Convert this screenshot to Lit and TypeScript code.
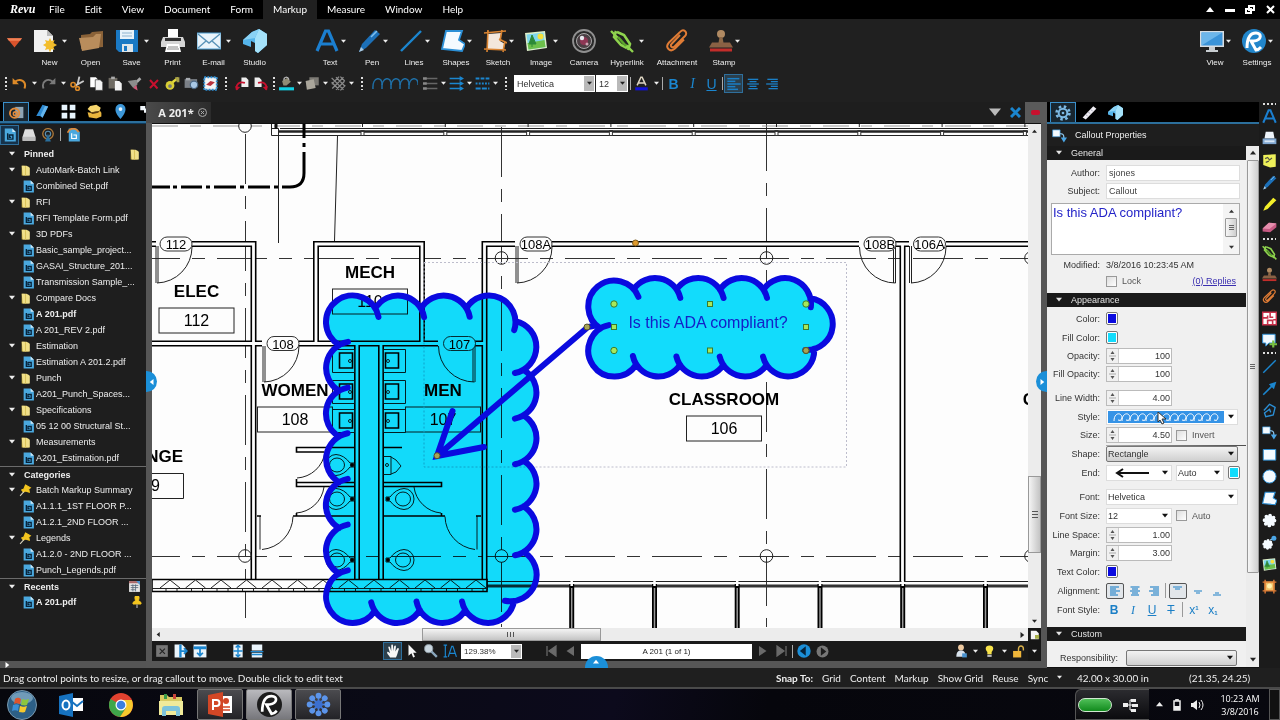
import { LitElement, html, css, svg, nothing } from "lit";
import { customElement } from "lit/decorators.js";
import { classMap } from "lit/directives/class-map.js";

/* ---------- shared styles ---------- */

const base = css`
  *, *::before, *::after { box-sizing: border-box; }
  :host { font-family: "Liberation Sans", Arial, sans-serif; font-size: 9px; color: #eee; }
  button { border: 0; padding: 0; margin: 0; background: none; color: inherit; font: inherit; display: flex; align-items: center; justify-content: center; cursor: default; }
  input, select, textarea { font: inherit; margin: 0; border-radius: 0; outline: 0; min-width: 0; }
  select { appearance: none; }
  a { color: inherit; }
  svg { display: block; flex: none; }
  .dots { display: flex; align-items: center; justify-content: center; }
  .dots::before { content: ""; width: 2px; height: 13px; background: repeating-linear-gradient(#ddd 0 2px, transparent 2px 4px); }
`;

/* ---------- icons, all on a 24 unit grid ---------- */

const file = svg`<path d="M3 1h13l6 6v16H3z" fill="#4aa8de"/><path d="M16 1v6h6z" fill="#cfeaf8"/><path d="M8 9v10h9v-7h-6v4h3" fill="none" stroke="#06233a" stroke-width="2.4"/>`;
const boldA = svg`<path d="M2 22 10.500 2h3L22 22M6 15h12" fill="none" stroke="#1b7fd0" stroke-width="3.200"/>`;
const house = svg`<path d="M0 11 9 3 16 0l8 5v11l-9 8-3-2v-8l-4-2v6l-8-3z" fill="#55b4ea"/><path d="m12 9 4-9 8 5v11l-9 8-3-2z" fill="#a5e2fa"/><path d="m0 11 9-8 7-3-4 9z" fill="#8ad2f5"/>`;
const clip = svg`<path d="M15 6 6.500 15c-2 2 .8 4.600 2.800 2.600L20 7c3.400-3.600-1.400-7.600-4.600-4.400L4 13.500C-.5 18.500 5 24 10 19.500l9-9" fill="none" stroke="#e07c35" stroke-width="2"/>`;
const link = svg`<path d="M1 2 8 9M16 16l7 7" stroke="#8fd44e" stroke-width="2.400"/><path d="M6 2 4 8l7 8 6 3M18 21l2-6-6-9-7-3" fill="none" stroke="#8fd44e" stroke-width="2.600"/><path d="m8 8 8 9" stroke="#5da52c" stroke-width="2.600"/>`;
const stamp = svg`<circle cx="12" cy="5" r="4" fill="#b08a62"/><path d="M10.500 8h3l1 6h-5z" fill="#8d6847"/><path d="M3 13.500h18l3 5H0z" fill="#8a6144"/><path d="M1 19.500h22v3H1z" fill="#c32d2a"/>`;
const photo = svg`<path d="m1 4 20-2 2 17-20 3z" fill="#dff0c9"/><path d="m2.500 5.500 17-2 2 14.500-17 2.500z" fill="#7fd7ee"/><path d="m3.500 14 17-3 1 7-17 2.500z" fill="#6cc04a"/><circle cx="16.500" cy="7.500" r="3" fill="#f7e13a"/><path d="m8 6 4 9H5zM8 12v6" fill="#2d8a39" stroke="#2d8a39"/>`;
const sketch = svg`<path d="m5 5 13-1-1 8 5 3-2 6-15-1z" fill="#f3e7dc"/><path d="M1 4 23 2M5 1 4 23M19 1l-2 11M1 20l22 1M16 10l8 4M22 12l-2 11" stroke="#d98432" stroke-width="1.600"/>`;
const shape = svg`<path d="M5 2h16l-3 9 6 4-3 7L1 20z" fill="#f4faff" stroke="#2b8fd6" stroke-width="1.800"/>`;
const pen = svg`<path d="M2 23 5 15 18 1l5 4L9 19z" fill="#1c70b8"/><path d="m14 8 6-6" stroke="#7fc0ef" stroke-width="1.600"/><path d="m2 23 2-5 3 3z" fill="#a9c9e2"/>`;
const line = svg`<path d="M2 22 22 2" stroke="#1b86cf" stroke-width="2.400"/>`;
const folder = svg`<path d="M5 3h5l2 2h6v16H5z" fill="#c9b043"/><path d="M5 3h9l6 4v14H7z" fill="#f1e08a"/><path d="M12 4v17" stroke="#d9c25a" stroke-width="2"/>`;
const pin = svg`<path d="m12 2 9 5-3 2 1 6-7-2-4 2-3-4 4-2z" fill="#f4c51f" stroke="#f4c51f" stroke-width="2"/><path d="m9 14-7 8" stroke="#d8d2bd" stroke-width="2"/>`;
const gear = svg`<circle cx="12" cy="12" r="6.500" fill="none" stroke="#7db9e4" stroke-width="3"/><circle cx="12" cy="12" r="9.600" fill="none" stroke="#7db9e4" stroke-width="4" stroke-dasharray="3.700 3.840"/><circle cx="12" cy="12" r="2" fill="#7db9e4"/>`;
const align = (k: string, c = "#1b7fc6") => {
  const w = [18, 12, 20, 12, 16];
  return w.map((n, i) => { const x = k === "l" ? 2 : k === "c" ? 12 - n / 2 : 22 - n; return svg`<path d="M${x} ${4 + i * 4}h${n}" stroke=${c} stroke-width="2.200"/>`; });
};

const icons: Record<string, unknown> = {
  file, boldA, house, clip, link, stamp, photo, sketch, shape, pen, line, folder, pin, gear,
  expand: svg`<path d="M0 5h24L12 20z" fill="#d9532c"/><path d="M0 5h24l-3 4H3z" fill="#f08155"/>`,
  new: svg`<path d="M1 1h13l6 6v16H1z" fill="#f1f1f1"/><path d="M14 1v6h6z" fill="#bbb"/><path d="m17 9 1.500 3 3-1-1 3 3.500 2-3.500 2 1 3-3-1-1.500 3.500-1.500-3.500-3.500 1 1.200-3L10 16l3.200-2-1.200-3 3.500 1z" fill="#f3bd2b"/>`,
  open: svg`<path d="m2 6 9-1 2-2 11-1v16L2 20z" fill="#8a6238"/><path d="m0 9 14-1 3-3h5l-2 14-17 3z" fill="#b98d5c"/>`,
  save: svg`<path d="M1 1h22v22H4l-3-3z" fill="#1a79c4"/><path d="M5 1h14v9H5z" fill="#e9f3fa"/><path d="M7 4h10M7 7h10" stroke="#8fb4cf"/><path d="M7 15h11v8H7z" fill="#dfe6ea"/><path d="M9 17h3v5H9z" fill="#1a79c4"/>`,
  print: svg`<path d="M7 0h10v9H7z" fill="#fff"/><path d="M2 8h20l2 5v5H0v-5z" fill="#d5d5d5"/><path d="M4 9h16v3H4z" fill="#333"/><path d="M6 15h12l2 8H4z" fill="#fff"/><path d="M7 18h10M6 20h12" stroke="#888"/>`,
  mail: svg`<path d="M0 4h24v16H0z" fill="#eaf4fb" stroke="#4d9fd4"/><path d="m1 5 11 9 11-9M1 19l8-7M23 19l-8-7" fill="none" stroke="#5a93b8" stroke-width="1.400"/>`,
  camera: svg`<circle cx="12" cy="12" r="11" fill="#2a2a2a" stroke="#909090" stroke-width="1.800"/><circle cx="12" cy="12" r="7.500" fill="#4b3f44" stroke="#a9a9a9"/><circle cx="12" cy="12" r="4" fill="#8d3654"/><circle cx="10" cy="9" r="2.200" fill="#e8e8ee"/><circle cx="15" cy="15" r="1.500" fill="#cfa4b4"/>`,
  monitor: svg`<path d="M0 2h24v16H0z" fill="#d9dee2"/><path d="M1.500 3.500h21v13h-21z" fill="#3b93d8"/><path d="m1.500 3.500 21 0-21 13z" fill="#6cb6ea"/><path d="M9 18h6v3h3v2H6v-2h3z" fill="#c8cdd1"/>`,
  revu: svg`<circle cx="12" cy="12" r="12" fill="#2286cb"/><path d="M5 19C5 9 8 4 14 4c6 0 6 7-2 8l-3 0 5 9c3 0 4-2 5-3" fill="none" stroke="#fff" stroke-width="3"/>`,
  undo: svg`<path d="M5 9c8-6 19-1 15 11" fill="none" stroke="#dd8a28" stroke-width="3.200"/><path d="M1 3v10h10z" fill="#dd8a28"/>`,
  redo: svg`<path d="M19 9C11 3 0 8 4 20" fill="none" stroke="#7a7a7a" stroke-width="3"/><path d="M23 3v10H13z" fill="#7a7a7a"/>`,
  cut: svg`<path d="m15 1-3 13M22 8 9 15" stroke="#c9c9c9" stroke-width="3"/><circle cx="5" cy="14" r="3.500" fill="none" stroke="#dd8a28" stroke-width="2.500"/><circle cx="12" cy="20" r="3" fill="none" stroke="#dd8a28" stroke-width="2.500"/>`,
  copy: svg`<path d="M2 2h9l3 3v13H2z" fill="#fff"/><path d="M10 6h8l4 4v13H10z" fill="#f3f3f3" stroke="#222"/>`,
  paste: svg`<path d="M1 3h14v17H1z" fill="#6e6a62"/><path d="M5 1h6v4H5z" fill="#aaa"/><path d="M11 8h7l4 4v11H11z" fill="#f3f3f3"/>`,
  brush: svg`<path d="m14 8 6-6 3 3-6 6z" fill="#a9a9a9"/><path d="m1 8 14-2 2 7-7 6z" fill="#8d8d8d"/><path d="m10 19 5-5 2 9z" fill="#d25a78"/>`,
  del: svg`<path d="m4 4 15 17M20 4 4 20" stroke="#c8102e" stroke-width="4"/>`,
  key: svg`<path d="M12 10 21 3" stroke="#e6dc3c" stroke-width="4"/><circle cx="8" cy="15" r="7" fill="#d9cf35"/><circle cx="8" cy="16" r="3" fill="#777"/><path d="M16 2h7v8h-4z" fill="#a9a24a"/>`,
  cam2: svg`<path d="M1 5h20v14H1z" fill="#7b8087"/><path d="M3 3h7v4H3z" fill="#a7abb0"/><circle cx="16" cy="14" r="6" fill="#a9c8e6" stroke="#4b6784" stroke-width="2"/>`,
  snap: svg`<path d="M2 2h20v20H2z" fill="#f4f4f4" stroke="#2b8fd6" stroke-width="3" stroke-dasharray="3 2"/><path d="m5 14 7-6 7 2-7 6z" fill="#b8323e"/>`,
  rotl: svg`<path d="M11 1h8l4 4v12H11z" fill="#eee"/><path d="M3 22C1 12 8 7 17 10" fill="none" stroke="#c8102e" stroke-width="3"/><path d="m0 16 9 1-6 6z" fill="#c8102e"/>`,
  rotr: svg`<path d="M1 1h8l4 4v12H1z" fill="#eee"/><path d="M21 22C23 12 16 7 7 10" fill="none" stroke="#c8102e" stroke-width="3"/><path d="m24 16-9 1 6 6z" fill="#c8102e"/>`,
  bucket: svg`<path d="M5 8 13 3l6 6-7 6H7z" fill="#8f8b74"/><path d="M8 7c-1-6 6-7 8-1" fill="none" stroke="#bbb" stroke-width="2"/><path d="M0 18h24v5H0z" fill="#12cfe2"/>`,
  layer: svg`<path d="M7 2h15v13H7z" fill="#7c7a74"/><path d="m1 8 13-3 3 14-14 3z" fill="#aaa69b"/>`,
  hatch: svg`<path d="m1 3 19 19M8 2l14 14M1 10l12 12M15 1l7 7M20 2 2 20M13 1 1 13M22 8 8 22M23 15l-8 8" stroke="#8a8a8a" stroke-width="2"/>`,
  lines1: svg`<path d="M3 4h20M3 12h20M3 20h20" stroke="#666" stroke-width="2.400"/><path d="M0 4h6M0 12h6M0 20h6" stroke="#888" stroke-width="4"/>`,
  lines2: svg`<path d="M1 4h20M1 12h20M1 20h20" stroke="#1b86cf" stroke-width="2.600"/><path d="m17 0 7 4-7 4zM17 8l7 4-7 4zM17 16l7 4-7 4z" fill="#1b86cf"/>`,
  lines3: svg`<path d="M1 4h22" stroke="#1b86cf" stroke-width="3" stroke-dasharray="6 2"/><path d="M1 12h22" stroke="#1b86cf" stroke-width="3" stroke-dasharray="3 2"/><path d="M1 20h22" stroke="#1b86cf" stroke-width="3" stroke-dasharray="8 2"/>`,
  textcolor: svg`<path d="M5 15 11 2h2l6 13M7.500 11h9" fill="none" stroke="#ddd5c2" stroke-width="2.400"/><path d="M2 18h20v5H2z" fill="#1212d8"/>`,
  al: align("l"), ac: align("c"), ar: align("r"),
  clipbook: svg`<path d="M10 3h13v18H10z" fill="#8ea5b5"/><circle cx="9" cy="13" r="7.500" fill="none" stroke="#e08a3a" stroke-width="3"/><circle cx="10" cy="14" r="3" fill="none" stroke="#e08a3a" stroke-width="2.500"/>`,
  ribbon: svg`<path d="m12 1 9 3-9 18-4-3-6 0z" fill="#2f8cd4"/><path d="m16 3 5 1-9 18-3-4z" fill="#66b5ec"/>`,
  grid4: svg`<path d="M1 1h9v9H1zM14 1h9v9h-9zM1 14h9v9H1zM14 14h9v9h-9z" fill="#e6f3fc"/>`,
  chest: svg`<path d="m1 13 5 1 15-3 2 3v6l-8 3-12-2z" fill="#e9b63d"/><path d="m1 8 4-5 10-2 7 5-2 5-13 2z" fill="#f5d56c"/><path d="m5 14 15-3-2 3-9 2z" fill="#5a3b10"/>`,
  place: svg`<path d="M12 24C3 14 4 9 4 8a8 8 0 0 1 16 0c0 2 0 7-8 16z" fill="#3d97d8"/><circle cx="12" cy="8" r="3" fill="#eaf6ff"/>`,
  piece: svg`<path d="M2 3h8v4h4V1h10v22H14v-9H8v-4H2z" fill="#f2f8fd"/>`,
  disk: svg`<path d="M5 2h14l4 13v7H1v-7z" fill="#dedede"/><path d="M1 15h22v7H1z" fill="#bcbcbc"/>`,
  radar: svg`<circle cx="12" cy="10" r="9" fill="none" stroke="#b07a3a" stroke-width="2.200"/><circle cx="12" cy="10" r="4.500" fill="none" stroke="#5a8fb0" stroke-width="2"/><path d="m12 10-5 13h10z" fill="#2a6f9c"/>`,
  refile: svg`<path d="M3 1h13l6 6v16H3z" fill="#4aa8de"/><path d="M8 9v9h8v-6h-5" fill="none" stroke="#fff" stroke-width="2"/><path d="M1 8C6-2 16 0 20 7" fill="none" stroke="#e08a3a" stroke-width="3"/>`,
  calendar: svg`<path d="M2 2h20v20H2z" fill="#e8e8e8"/><path d="M2 2h20v4H2z" fill="#a66"/><path d="M5 10h14M5 14h14M5 18h9M9 8v13M14 8v13" stroke="#567" stroke-width="1.500"/><path d="M15 2h7v7z" fill="#4a93d0"/>`,
  pushpin: svg`<path d="M8 1h8v4l-1 4 5 4v3H4v-3l5-4-1-4z" fill="#f4c51f" stroke="#f4c51f" stroke-width="2"/><path d="M12 17v7" stroke="#ccc" stroke-width="2"/>`,
  ruler: svg`<path d="m1 20 17-18 5 4L6 23z" fill="#f0eef4"/><path d="m6 15 3 3m1-7 3 3m1-7 3 3" stroke="#99a" stroke-width="1.500"/>`,
  callout: svg`<path d="M1 3h12v11H1z" fill="#f4faff" stroke="#2b8fd6"/><path d="M13 9c6 0 6 3 6 8" fill="none" stroke="#8cc4ea" stroke-width="2"/><path d="M14 15h10l-5 8z" fill="#4aa6e6"/>`,
  printer2: svg`<path d="M6 1h12l2 11H4z" fill="#eef4fa"/><path d="M1 12h22v9H1z" fill="#7fa6d0"/><path d="M4 15h16v3H4z" fill="#d8e6f4"/>`,
  note: svg`<path d="m2 3 20-1v20l-9 1-11-4z" fill="#eef05a"/><path d="m5 9 4-2 3 4 4-3M6 15l5-2" fill="none" stroke="#554" stroke-width="1.800"/>`,
  marker: svg`<path d="m2 22 3-7L18 1l5 4-14 14z" fill="#f4f02a"/>`,
  eraser: svg`<path d="m1 15 10-9 12 1v6l-10 8-12-1z" fill="#c65a83"/><path d="m1 15 10-9 12 1-11 9z" fill="#e68fae"/>`,
  plan: svg`<path d="M1 2h22v20H1z" fill="#fff" stroke="#c8324c" stroke-width="2.500"/><path d="M1 11h8V7M13 2v8h5M9 22v-7h8v7M18 14h5" fill="none" stroke="#c8324c" stroke-width="2.500"/>`,
  noteplus: svg`<path d="M1 2h20v14H11l-5 5v-5H1z" fill="#f0f8ff" stroke="#2b8fd6" stroke-width="1.500"/><path d="M18 12v11M12 18h12" stroke="#7ac143" stroke-width="3.500"/>`,
  arrowline: svg`<path d="M2 22 18 6" stroke="#1b86cf" stroke-width="2.600"/><path d="M23 1 11 5l8 8z" fill="#1b86cf"/>`,
  poly: svg`<path d="M3 12 12 2l9 5-3 12-12 3-2-6 8-6 2 5" fill="none" stroke="#2b8fd6" stroke-width="2.200"/>`,
  rect: svg`<path d="M2 4h20v17H2z" fill="#f4faff" stroke="#2b8fd6" stroke-width="1.500"/>`,
  circ: svg`<circle cx="12" cy="12" r="10.500" fill="#f4faff" stroke="#2b8fd6" stroke-width="1.500"/>`,
  cloud: svg`<circle cx="12" cy="12" r="8" fill="#f4faff"/><circle cx="12" cy="12" r="8" fill="none" stroke="#f4faff" stroke-width="6" stroke-linecap="round" stroke-dasharray="0 6.280"/>`,
  cloud2: svg`<circle cx="9" cy="15" r="6" fill="#f4faff"/><circle cx="9" cy="15" r="6" fill="none" stroke="#f4faff" stroke-width="5" stroke-linecap="round" stroke-dasharray="0 4.710"/><path d="m13 8 5-2" stroke="#8cc4ea" stroke-width="2"/><circle cx="19" cy="5" r="4" fill="#4aa6e6"/>`,
  crop: svg`<path d="M4 4h16v15H4z" fill="#f0c26a"/><path d="M5 1v22M19 1v22M1 5h22M1 19h22" stroke="#e07c35" stroke-width="2.200"/><circle cx="12" cy="11" r="4" fill="#fff2b0"/>`,
  p1: svg`<path d="M2 2h20v20H2z" fill="#777"/><path d="m8 8 9 9m0-9-9 9" stroke="#222" stroke-width="2"/>`,
  p2: svg`<path d="M1 1h13l5 5v17H1z" fill="#eaf4fb"/><path d="M9 1h4v22H9z" fill="#1b86cf"/><path d="M12 12h9m-4-5 5 5-5 5" fill="none" stroke="#1b86cf" stroke-width="3"/>`,
  p3: svg`<path d="M1 1h22v22H1z" fill="#eaf4fb"/><path d="M1 4h22v5H1z" fill="#1b86cf"/><path d="M12 8v11m-5-4 5 5 5-5" fill="none" stroke="#1b86cf" stroke-width="3"/>`,
  p4: svg`<path d="M4 1h16v22H4z" fill="#eaf4fb"/><path d="M4 12h16M12 2v20m-4-16 4-4 4 4m-8 12 4 4 4-4" fill="none" stroke="#1b86cf" stroke-width="2.400"/>`,
  p5: svg`<path d="M3 1h18v10H3zM3 15h18v8H3z" fill="#eaf4fb"/><path d="M1 13h22M3 18h18" stroke="#1b86cf" stroke-width="2.400"/>`,
  hand: svg`<path d="M7 23c-2-4-6-7-5-9s3 0 5 2L4 6c0-2 2-3 3 0l2 6L9 3c0-3 3-3 3 0l1 9 1-8c1-2 3-2 3 1l-1 8 3-5c1-2 3-1 3 1-2 5-2 9-5 14z" fill="#f8f8f8"/>`,
  cursor: svg`<path d="M6 1v19l5-4 3 7 3-1-3-7h6z" fill="#f8f8f8"/>`,
  lens: svg`<circle cx="8" cy="8" r="7" fill="#c9d6df" stroke="#8d9aa3" stroke-width="1.500"/><path d="m13 13 9 9" stroke="#8aa7bd" stroke-width="4"/>`,
  ia: svg`<path d="M1 2h6M4 2v20M1 22h6M9 22 15 4h2l6 18M11 16h10" fill="none" stroke="#1b86cf" stroke-width="2"/>`,
  first: svg`<path d="M4 2v20M22 2v20L8 12z" stroke="#6a6a6a" stroke-width="2.500" fill="#6a6a6a"/>`,
  prev: svg`<path d="M20 2v20L5 12z" fill="#6a6a6a"/>`,
  next: svg`<path d="M4 2v20l15-10z" fill="#6a6a6a"/>`,
  last: svg`<path d="M20 2v20M2 2v20l14-10z" stroke="#6a6a6a" stroke-width="2.500" fill="#6a6a6a"/>`,
  back: svg`<circle cx="12" cy="12" r="11.500" fill="#1b8fd8"/><path d="M15 4v16L5 12z" fill="#06233a"/>`,
  fwd: svg`<circle cx="12" cy="12" r="11" fill="#777"/><path d="M9 4v16l10-8z" fill="#1d1d1d"/>`,
  user: svg`<circle cx="12" cy="6" r="5" fill="#eec9a0"/><path d="M4 22c0-8 3-11 8-11s8 3 8 11z" fill="#d8e2ec"/><path d="M14 16h8v7h-8z" fill="#4a93d0"/>`,
  bulb: svg`<path d="M12 1c9 0 8 8 4 12v4H8v-4C4 9 3 1 12 1z" fill="#f7e24a"/><path d="M8 18h8v4H8z" fill="#bbb"/>`,
  lock: svg`<path d="M12 11V7c0-7 9-7 9 0v3" fill="none" stroke="#d8b04a" stroke-width="2.600"/><path d="M2 11h15v12H2z" fill="#f0b63a"/>`,
  page: svg`<path d="M2 2h13l6 6v14H2z" fill="#f4f4f4"/><path d="M12 12h10v9H12z" fill="#a8b04a"/>`,
};

const ic = (name: string, s = 16) => html`<svg width=${s} height=${s} viewBox="0 0 24 24" aria-hidden="true">${icons[name]}</svg>`;
const tri = (dir: string, w = 6, c = "currentColor") => {
  const d: Record<string, string> = { d: "M0 0h8L4 5z", u: "M0 5h8L4 0z", l: "M6 0v8L1 4z", r: "M2 0v8l5-4z" };
  return html`<svg width=${w} height=${w} viewBox=${dir === "d" || dir === "u" ? "0 -1 8 8" : "0 0 8 8"} aria-hidden="true"><path d=${d[dir]} fill=${c}></path></svg>`;
};

/* ---------- file access panel ---------- */

type Entry = [kind: string, text: string, extra?: string];
const entries: Entry[] = [
  ["head", "Pinned", "folder"],
  ["folder", "AutoMark-Batch Link"], ["file", "Combined Set.pdf"],
  ["folder", "RFI"], ["file", "RFI Template Form.pdf"],
  ["folder", "3D PDFs"], ["file", "Basic_sample_project..."], ["file", "GASAI_Structure_201..."], ["file", "Transmission Sample_..."],
  ["folder", "Compare Docs"], ["file", "A 201.pdf", "bold"], ["file", "A 201_REV 2.pdf"],
  ["folder", "Estimation"], ["file", "Estimation A 201.2.pdf"],
  ["folder", "Punch"], ["file", "A201_Punch_Spaces..."],
  ["folder", "Specifications"], ["file", "05 12 00 Structural St..."],
  ["folder", "Measurements"], ["file", "A201_Estimation.pdf"],
  ["head", "Categories"],
  ["pin", "Batch Markup Summary"], ["file", "A1.1.1_1ST FLOOR P..."], ["file", "A1.2.1_2ND FLOOR ..."],
  ["pin", "Legends"], ["file", "A1.2.0 - 2ND FLOOR ..."], ["file", "Punch_Legends.pdf"],
  ["head", "Recents", "calendar"], ["file", "A 201.pdf", "pinned"],
];

@customElement("file-panel")
class FilePanel extends LitElement {
  static styles = [base, css`
    :host { display: flex; flex-direction: column; background: #1e1e1e; min-height: 0; overflow: hidden; }
    .tabs { display: flex; height: 21px; background: #000; border-bottom: 2px solid #2c6f9c; padding-left: 3px; flex: none; overflow: hidden; }
    .tabs button { width: 26px; flex: none; }
    .tabs .on { background: #182630; border: 1px solid #3a8fca; border-bottom: 0; }
    .tools { display: flex; height: 22px; align-items: center; flex: none; border-top: 1px solid #0f3a5a; }
    .tools button { width: 19px; height: 20px; }
    .tools .on { border: 1px solid #2f6f9c; background: #16324a; }
    .tools i { width: 1px; height: 13px; background: #aaa; margin: 0 3px; }
    ul { list-style: none; margin: 0; padding: 1px 0 0; flex: 1; min-height: 0; overflow: hidden; }
    li { display: flex; align-items: center; height: 16px; gap: 1px; padding-left: 22px; white-space: nowrap; }
    li.branch { padding-left: 9px; gap: 4px; }
    li.head { padding-left: 9px; gap: 9px; font-weight: bold; padding-right: 5px; }
    li.rule { border-top: 1px solid #6b6b6b; }
    li.bold { font-weight: bold; }
    li span { flex: 1; }
    li.pinned { padding-right: 3px; }
    .foot { height: 7px; background: #555; flex: none; display: flex; align-items: center; padding-left: 4px; color: #fff; }
  `];
  render() {
    return html`
      <div class="tabs">${["clipbook", "ribbon", "grid4", "chest", "place", "piece"].map((n, i) => html`<button class=${i ? "" : "on"} aria-label=${n}>${ic(n, 15)}</button>`)}</div>
      <div class="tools">
        <button class="on" aria-label="file">${ic("file", 14)}</button><button aria-label="disk">${ic("disk", 14)}</button><button aria-label="radar">${ic("radar", 14)}</button><i></i><button aria-label="recent files">${ic("refile", 14)}</button>
      </div>
      <ul>${entries.map(([k, t, x], i) => html`
        <li class=${classMap({ head: k === "head", branch: k === "folder" || k === "pin", rule: k === "head" && i > 0, bold: x === "bold" || x === "pinned", pinned: x === "pinned" })}>
          ${k === "file" ? ic("file", 13) : tri("d", 6)}
          ${k === "folder" || k === "pin" ? ic(k, 13) : nothing}
          <span>${t}</span>
          ${k === "head" && x ? ic(x, 13) : nothing}${x === "pinned" ? ic("pushpin", 12) : nothing}
        </li>`)}</ul>
      <div class="foot">${tri("r", 6)}</div>`;
  }
}

/* ---------- floor plan with markups ---------- */

type Pt = [number, number];

/* Builds a revision cloud from circle centres given clockwise; every scallop runs past its cusp as a short tail. */
function cloudPath(c: Pt[], r: number) {
  const n = c.length;
  const cusp = (a: Pt, b: Pt) => {
    const dx = b[0] - a[0], dy = b[1] - a[1];
    return Math.atan2(dy, dx) - Math.acos(Math.hypot(dx, dy) / 2 / r);
  };
  const at = (p: Pt, t: number) => `${(p[0] + r * Math.cos(t)).toFixed(1)} ${(p[1] + r * Math.sin(t)).toFixed(1)}`;
  let fill = "", stroke = "";
  for (let i = 0; i < n; i++) {
    const prev = c[(i + n - 1) % n], cur = c[i], next = c[(i + 1) % n];
    const start = at(prev, cusp(prev, cur));
    const t = cusp(cur, next);
    const end = at(cur, t), tail = at(cur, t + 0.35);
    const p = cusp(prev, cur);
    const sx = prev[0] + r * Math.cos(p), sy = prev[1] + r * Math.sin(p);
    let sweep = t - Math.atan2(sy - cur[1], sx - cur[0]);
    sweep = ((sweep % (2 * Math.PI)) + 2 * Math.PI) % (2 * Math.PI);
    fill += `${i ? "" : "M" + start}A${r} ${r} 0 ${sweep > Math.PI ? 1 : 0} 1 ${end}`;
    stroke += `M${start}A${r} ${r} 0 ${sweep + 0.35 > Math.PI ? 1 : 0} 1 ${tail}`;
  }
  return { fill: fill + "Z", stroke };
}

const big = cloudPath([
  ...[352.5, 398, 443.7, 489].map((x): Pt => [x, 322]),
  ...[347, 392.6, 438.2, 483.7, 529.3, 574.8].map((y): Pt => [510, y]),
  ...[488, 442.5, 397, 352.5].map((x): Pt => [x, 596.5]),
  ...[550.7, 505, 459.3, 413.7, 368].map((y): Pt => [352.5, y]),
], 26.5);
const small = cloudPath([
  [614.3, 306.5], ...[655, 698.3, 741.7, 785].map((x): Pt => [x, 304]), [806.5, 324],
  ...[788.3, 745, 701.7, 658.3, 614.3].map((x): Pt => [x, 350.5]),
], 26);

const walls = "M152 244H156M192 244H253.500V579M152 343.500H262M299 343.500H438M473 343.500H484.500M316 343.500V244H422V343.500M357 345V579M381 345V579M515 244H484.500V590M552 244H859M893 244H909M902.500 244V581M946 244H1028";
const doors = "M156 246v37M158 246v37M192 247a36 36 0 0 1-35 36M263 346v36M265 346v36M299 346a36 36 0 0 1-35 36M475 346v36M473 346v36M438.500 346a36 36 0 0 0 36 36M516 246v37M518 246v37M552 247a36 36 0 0 1-35 36M895.500 246v37M893.500 246v37M859.500 247a36 36 0 0 0 36 36M909.500 246v37M911.500 246v37M946 247a36 36 0 0 1-35 36M325 452a30 30 0 0 1-28 26M324 487a30 30 0 0 1-28 26M414 487a30 30 0 0 0 27 26M260 516v33.500M262 549.500a34 34 0 0 0 31-33M477 516v33.500M475 549.500a34 34 0 0 1-30-33";
const tags: [string, number, number][] = [["112", 176, 244], ["108", 283, 343.5], ["107", 459.5, 343.5], ["108A", 536, 244], ["108B", 880, 244], ["106A", 929.5, 244]];
const rooms: [string, string, number, number][] = [["ELEC", "112", 196.5, 297], ["MECH", "110", 370, 278], ["WOMEN", "108", 295, 396], ["MEN", "107", 443, 396], ["CLASSROOM", "106", 724, 405]];
const posts = [571.7, 654.5, 737.2, 820, 902.7, 985.5];
const range = (n: number) => [...Array(n).keys()];

@customElement("plan-view")
class PlanView extends LitElement {
  static styles = [base, css`
    :host { display: block; background: #fdfdfd; overflow: hidden; min-height: 0; min-width: 0; position: relative; }
    .sheet { position: absolute; inset: 0; width: 100%; height: 100%; font-family: "Liberation Sans", Arial, sans-serif; }
    .thin { fill: none; stroke: #222; stroke-width: 1; }
    .axis { fill: none; stroke: #333; stroke-width: 1; stroke-dasharray: 50 12 13 12; }
    .heavy { fill: none; stroke: #000; stroke-width: 1.6; }
    .name { font-size: 17px; font-weight: bold; text-anchor: middle; fill: #000; }
    .num { font-size: 16px; text-anchor: middle; fill: #000; }
    .tag { font-size: 13px; text-anchor: middle; fill: #000; }
    .end { text-anchor: end; }
    .fill { fill: #12dcfc; mix-blend-mode: multiply; }
    .ink { fill: none; stroke: #0a0adf; stroke-width: 6; stroke-linecap: round; }
    .note { font-size: 16px; fill: #1420c8; text-anchor: middle; }
    .grip { fill: #a6e85c; stroke: #3c7a2c; stroke-width: 1; }
    .knob { fill: #a9a455; stroke: #55532c; stroke-width: 1; }
    .bounds { fill: none; stroke: #bdbdcc; stroke-dasharray: 2 2; }
  `];
  render() {
    return html`<svg class="sheet" viewBox="152 124 876 504" preserveAspectRatio="xMinYMin slice" role="img" aria-label="Floor plan A 201">
      <path class="axis" d="M130 258.500H1028M130 556.500H1028M245.500 134V618M501.500 127V627M766.500 121V627"/>
      <path d="M152 126H1028" stroke="#999" stroke-dasharray="26 12 11 12"/>
      <path class="thin" d="M271.500 124v11.500H1028M271.500 128.500h7v7M280 128.500h748"/>
      <path d="M278 131.500h750" stroke="#222" stroke-width="2.600"/><path d="M276 124v5" stroke="#111" stroke-width="3"/>
      ${range(9).map(i => svg`<path d="M${362.5 + i * 82.8} 130v6" stroke="#333" stroke-width="4"/><path d="M${362.5 + i * 82.8} 132v3" stroke="#fff" stroke-width="2"/><path class="thin" d="M${362.5 + i * 82.8} 124v3"/>`)}
      <path class="thin" d="M278.500 135V243M337.500 136 334.500 241" stroke="#555"/>
      <path d="M152 187h18m3 0h4m4 0h21m4 0h4m4 0h22m4 0h4m4 0h22m4 0h4m4 0h8q14 0 14-14v-21m0-5v-4m0-5v-14" fill="none" stroke="#000" stroke-width="3"/>
      <path d=${walls} fill="none" stroke="#000" stroke-width="6"/><path d=${walls} fill="none" stroke="#fdfdfd" stroke-width="2.800"/>
      <path class="thin" d=${doors}/>
      <path class="thin" d="M487 581.500h541"/><path d="M487 586h541" stroke="#333" stroke-width="3"/>
      ${posts.map(x => svg`<path d="M${x} 584V628" stroke="#000" stroke-width="5"/><path d="M${x} 588V628" stroke="#999" stroke-width="1.500"/><path d="M${x} 581V586" stroke="#fff" stroke-width="2.500"/>`)}
      <path d="M152 579.500h335v12H152z" fill="#fdfdfd" stroke="#000" stroke-width="1.600"/><path class="thin" d="M152 588.500h335"/>
      ${range(13).map(i => svg`<path class="thin" d="M${160 + i * 25.5} 588 l10 -8 10 8M${166 + i * 25.5} 588v3M${177 + i * 25.5} 588v3"/>`)}
      ${[349, 380, 409].map(y => svg`<path class="thin" d="M332.500 ${y}.5h22v23h-22zM383.500 ${y}.5h22v23h-22z"/><path class="heavy" d="M339.500 ${y + 4}h13v15h-13zM385.500 ${y + 4}h13v15h-13z"/><circle class="thin" cx="350" cy=${y + 12} r="1.500"/><circle class="thin" cx="388" cy=${y + 12} r="1.500"/>`)}
      <path class="heavy" d="M402 447.500H383M355 447.500H296.500v4.500h28M355 482.500H296.500v4H355M383 482.500h58.500v4H383M355 516H293M383 516h62M257 516h4M476 516h5M296.500 479v3M296.500 513v3M441.500 513v3"/>
      ${[[338, 465, 1], [338, 499, 1], [338, 560, 1], [402, 499, -1], [402, 560, -1]].map(([x, y, s]) => svg`<path class="thin" d="M${x + 16 * s} ${y - 2}l${-4 * s} 0q${-6 * s} -8 ${-14 * s} -8.500a10 10.500 0 0 ${s > 0 ? 0 : 1} 0 21q${8 * s} -.5 ${14 * s} -8.500l${4 * s} 0z"/><ellipse class="thin" cx=${x - s} cy=${y} rx="7.500" ry="7"/><circle cx=${x + 14 * s} cy=${y} r="2"/>`)}
      <path class="thin" d="M383.500 456.500h7.500v18h-7.500M391 457l5 3 5 6-5 6-5 2"/><circle class="thin" cx="387" cy="465" r="1.500"/>
      ${[[245, 126], [245, 556], [501.5, 258], [501.5, 556], [766.5, 258], [766.5, 556], [1031, 258], [1031, 556]].map(([x, y]) => svg`<circle class="thin" cx=${x} cy=${y} r="6.300"/>`)}
      ${tags.map(([t, x, y]) => svg`<rect x=${x - 16} y=${y - 7} width="32" height="14" rx="7" fill="#fdfdfd" stroke="#333"/><text class="tag" x=${x} y=${y + 5}>${t}</text>`)}
      ${rooms.map(([n, t, x, y]) => svg`<text class="name" x=${x} y=${y}>${n}</text><rect class="thin" x=${x - 37.5} y=${y + 11} width="75" height="25"/><text class="num" x=${x} y=${y + 29}>${t}</text>`)}
      <text class="name end" x="183" y="462">NGE</text><path class="thin" d="M152 473.500h31.500v25H152"/><text class="num end" x="160" y="491">9</text>
      <text class="name" x="1029" y="405">C</text>
      <path class="bounds" d="M424 262.500H846.500V467H424z"/>
      <path class="fill" d=${big.fill}/><path class="ink" d=${big.stroke}/>
      <path class="ink" d="M598 325 588 327 437 456M452.500 411 437 456 484 447"/>
      <path d=${small.fill} fill="#12dcfc"/><path class="ink" d=${small.stroke}/>
      <text class="note" x="708" y="328">Is this ADA compliant?</text>
      ${[614, 806].flatMap(x => [304, 350.5].map(y => svg`<circle class="grip" cx=${x} cy=${y} r="3.200"/>`))}
      ${[[710, 304], [614, 327], [806, 327], [710, 350.5]].map(([x, y]) => svg`<rect class="grip" x=${x - 2.5} y=${y - 2.5} width="5" height="5"/>`)}
      ${[[587, 327], [437, 455.7], [806, 350.5]].map(([x, y]) => svg`<circle class="knob" cx=${x} cy=${y} r="3"/>`)}
      <circle cx="635.500" cy="243" r="3" fill="#e09a2c" stroke="#7a5a1c"/>
    </svg>`;
  }
}

/* ---------- properties panel ---------- */

@customElement("properties-panel")
class PropertiesPanel extends LitElement {
  static styles = [base, css`
    :host { display: flex; flex-direction: column; background: #1e1e1e; min-height: 0; overflow: hidden; }
    .tabs { display: flex; height: 22px; background: #000; border-bottom: 2px solid #2c6f9c; padding-left: 3px; flex: none; }
    .tabs button { width: 26px; }
    .tabs .on { background: #182630; border: 1px solid #3a8fca; border-bottom: 0; }
    .title { display: flex; align-items: center; gap: 8px; height: 22px; flex: none; padding-left: 5px; }
    .body { flex: 1; min-height: 0; display: grid; grid-template-columns: 1fr 13px; overflow: hidden; border-bottom: 1px solid #111; }
    .form { background: #f0f0f0; color: #333; overflow: hidden; min-width: 0; }
    h3 { margin: 0; height: 14px; background: #1a1a1a; color: #e4e4e4; font-size: 9px; line-height: 14px; font-weight: normal; display: flex; align-items: center; gap: 9px; padding-left: 9px; }
    .group { padding: 4px 6px 4px 0; }
    .look { padding: 2px 6px 8px 0; }
    .row { display: grid; grid-template-columns: 53px 1fr; column-gap: 6px; height: 18px; align-items: center; }
    .row > label, .row > span { text-align: right; white-space: nowrap; }
    .row > .cell { text-align: left; }
    .short { height: 16px; }
    .tall { height: 19px; }
    .space { margin-top: 6px; }
    .cell { display: flex; align-items: center; gap: 4px; min-width: 0; }
    .text { width: 100%; height: 16px; border: 1px solid #ddd; background: #fff; color: #444; padding: 0 2px; }
    .memo { display: grid; grid-template-columns: 1fr 16px; margin: 3px 0 2px 4px; border: 1px solid #aaa; height: 52px; background: #fff; }
    .memo textarea { border: 0; resize: none; font-size: 13px; line-height: 15px; padding: 1px; color: #2424c8; overflow: hidden; background: none; white-space: nowrap; }
    .bar { display: grid; grid-template-rows: 14px 19px 1fr 14px; background: #f4f4f4; justify-items: center; align-items: center; color: #333; }
    .bar b, .scroll b { width: 12px; height: 100%; border: 1px solid #999; background: linear-gradient(90deg, #f6f6f6, #cfcfcf); border-radius: 1px; display: grid; place-items: center; }
    .bar b::before, .scroll b::before { content: ""; width: 5px; height: 6px; background: repeating-linear-gradient(#666 0 1px, transparent 1px 2px); }
    .scroll { display: grid; grid-template-rows: 14px 413fr 80fr 14px; background: #ececec; justify-items: center; align-items: center; color: #222; }
    .lock { justify-content: space-between; }
    .check { display: flex; align-items: center; gap: 5px; color: #555; }
    .check input { appearance: none; width: 11px; height: 11px; border: 1px solid #999; background: linear-gradient(135deg, #ddd, #fff); }
    .lock a { color: #3a2fb0; margin-right: 4px; }
    .swatch { width: 12px; height: 13px; border: 1px solid #777; border-radius: 2px; background: #fff; padding: 1px; }
    .swatch::before { content: ""; width: 100%; height: 100%; background: #0a0adf; }
    .cyan::before { background: #12dcfc; }
    .spin { display: grid; grid-template-columns: 12px 1fr; width: 66px; height: 16px; border: 1px solid #bbb; background: #fff; }
    .spin i { display: grid; place-items: center; background: #f0f0f0; border-right: 1px solid #ccc; color: #555; }
    .spin input { border: 0; text-align: right; padding: 0 1px; color: #333; background: none; }
    .pick { display: flex; align-items: center; justify-content: flex-start; position: relative; background: #fff; border: 1px solid #ddd; height: 16px; color: #333; }
    .pick select { width: 100%; height: 100%; border: 0; background: none; color: #333; padding: 0 3px 0 1px; }
    .pick > svg:last-child { position: absolute; right: 3px; color: #111; }
    .wide { width: 132px; }
    .half { width: 66px; }
    .auto { width: 48px; }
    .grey { background: linear-gradient(#f2f2f2, #cfcfcf); border-color: #777; border-radius: 2px; }
    .style { background: #3593e6; margin: 1px; width: 116px; height: 12px; }
    .ghost { position: relative; }
    .ghost::before { content: ""; position: absolute; left: 59px; right: -20px; top: 1px; height: 1px; background: linear-gradient(90deg, #aaa, #444); z-index: 1; }
    .tools { gap: 3px; }
    .tools button { width: 16px; height: 16px; color: #1b7fc6; font-size: 12px; line-height: 16px; }
    .tools .on { border: 1px solid #555; background: #e2e6ea; border-radius: 2px; width: 18px; }
    .tools i { width: 1px; height: 15px; background: #999; }
    .tools .i { font-style: italic; font-family: "Liberation Serif", serif; }
    .tools .u { text-decoration: underline; }
    .tools .s { text-decoration: line-through; }
    .tools sup, .tools sub { font-size: 6px; font-weight: bold; line-height: 6px; }
    .tools sup { align-self: flex-start; padding-top: 3px; }
    .tools sub { align-self: flex-end; padding-bottom: 2px; }
    .custom { grid-template-columns: 71px 1fr; column-gap: 8px; margin-top: 4px; }
    .resp { width: 111px; }
    .mouse { position: absolute; left: 50px; top: 1px; z-index: 2; }
  `];
  private spin(id: string, v: string) {
    return html`<div class="spin"><i><svg width="7" height="12" viewBox="0 0 7 12"><path d="M1.500 4h4l-2-3zM1.500 8h4l-2 3z" fill="#555"/><path d="M0 6h7" stroke="#aaa"/></svg></i><input id=${id} .value=${v}></div>`;
  }
  private pick(id: string, v: string, cls: string, label = "") {
    return html`<div class="pick ${cls}"><select id=${id} aria-label=${label || nothing}><option>${v}</option></select>${tri("d", 6)}</div>`;
  }
  private row(label: string, id: string, content: unknown, cls = "") {
    return html`<div class="row ${cls}"><label for=${id}>${label}</label><div class="cell">${content}</div></div>`;
  }
  render() {
    return html`
      <div class="tabs"><button class="on" aria-label="Properties">${ic("gear", 16)}</button><button aria-label="Measurements">${ic("ruler", 15)}</button><button aria-label="Studio">${ic("house", 15)}</button></div>
      <div class="title">${ic("callout", 15)}<span>Callout Properties</span></div>
      <div class="body">
        <div class="form">
          <h3>${tri("d", 6)}General</h3>
          <div class="group">
            ${this.row("Author:", "author", html`<input class="text" id="author" .value=${"sjones"}>`)}
            ${this.row("Subject:", "subject", html`<input class="text" id="subject" .value=${"Callout"}>`)}
            <div class="memo"><textarea aria-label="Comment" .value=${"Is this ADA compliant?"}></textarea><div class="bar">${tri("u", 5)}<b></b><i></i>${tri("d", 5)}</div></div>
            <div class="row short"><span>Modified:</span><div class="cell">3/8/2016 10:23:45 AM</div></div>
            <div class="row short"><span></span><div class="cell lock"><label class="check"><input type="checkbox">Lock</label><a href="#">(0) Replies</a></div></div>
          </div>
          <h3>${tri("d", 6)}Appearance</h3>
          <div class="group look">
            ${this.row("Color:", "color", html`<button id="color" class="swatch"></button>`, "tall")}
            ${this.row("Fill Color:", "fillc", html`<button id="fillc" class="swatch cyan"></button>`, "tall")}
            ${this.row("Opacity:", "op", this.spin("op", "100"))}
            ${this.row("Fill Opacity:", "fop", this.spin("fop", "100"))}
            ${this.row("Line Width:", "lw", this.spin("lw", "4.00"), "space")}
            ${this.row("Style:", "style", html`<button id="style" class="pick wide"><svg class="style" viewBox="0 0 116 12">${range(13).map(i => svg`<path d="M${6 + i * 8} 10c0-9 8-9 8-3q-1 4-4 2" fill="none" stroke="#fff"/>`)}</svg><svg class="mouse" width="10" height="14" viewBox="0 0 10 14"><path d="M1 1v10l2-2 2 4 2-1-2-4h4z" fill="#fff" stroke="#333"/></svg>${tri("d", 6)}</button>`, "tall")}
            ${this.row("Size:", "size", html`${this.spin("size", "4.50")}<label class="check"><input type="checkbox">Invert</label>`)}
            ${this.row("Shape:", "shape", this.pick("shape", "Rectangle", "wide grey"), "tall ghost")}
            ${this.row("End:", "end", html`<button id="end" class="pick half"><svg width="48" height="10" viewBox="0 0 48 10"><path d="M10 5h32M16 1 10 5l6 4" fill="none" stroke="#111" stroke-width="2"/></svg>${tri("d", 6)}</button>${this.pick("endsize", "Auto", "auto", "End size")}<button class="swatch cyan" aria-label="End fill"></button>`, "tall")}
            ${this.row("Font:", "font", this.pick("font", "Helvetica", "wide"), "space")}
            ${this.row("Font Size:", "fs", html`${this.pick("fs", "12", "half")}<label class="check"><input type="checkbox">Auto</label>`, "tall")}
            ${this.row("Line Space:", "ls", this.spin("ls", "1.00"), "tall")}
            ${this.row("Margin:", "mg", this.spin("mg", "3.00"))}
            ${this.row("Text Color:", "tc", html`<button id="tc" class="swatch"></button>`, "tall")}
            <div class="row tall"><span>Alignment:</span><div class="cell tools"><button class="on" aria-label="Left">${ic("al", 12)}</button><button aria-label="Center">${ic("ac", 12)}</button><button aria-label="Right">${ic("ar", 12)}</button><i></i><button class="on" aria-label="Top"><svg width="12" height="12" viewBox="0 0 12 12"><path d="M1 2h9M3 4h5" stroke="#1b7fc6"/></svg></button><button aria-label="Middle"><svg width="12" height="12" viewBox="0 0 12 12"><path d="M2 6h8M4 8h4" stroke="#1b7fc6"/></svg></button><button aria-label="Bottom"><svg width="12" height="12" viewBox="0 0 12 12"><path d="M2 10h8M4 8h4" stroke="#1b7fc6"/></svg></button></div></div>
            <div class="row tall"><span>Font Style:</span><div class="cell tools"><button><b>B</b></button><button class="i">I</button><button class="u">U</button><button class="s">T</button><i></i><button>x<sup>1</sup></button><button>x<sub>1</sub></button></div></div>
          </div>
          <h3>${tri("d", 6)}Custom</h3>
          <div class="group"><div class="row custom"><label for="resp">Responsibility:</label><div class="cell">${this.pick("resp", "", "grey resp")}</div></div></div>
        </div>
        <div class="scroll">${tri("u", 6)}<b></b><i></i>${tri("d", 6)}</div>
      </div>`;
  }
}

/* ---------- application shell ---------- */

type Tool = [icon: string, label: string, drop: boolean, cls?: string];
const fileTools: Tool[] = [["new", "New", true], ["open", "Open", false], ["save", "Save", true], ["print", "Print", false], ["mail", "E-mail", true], ["house", "Studio", false]];
const markupTools: Tool[] = [["boldA", "Text", true], ["pen", "Pen", true], ["line", "Lines", true], ["shape", "Shapes", true], ["sketch", "Sketch", true], ["photo", "Image", true, "mid"], ["camera", "Camera", false], ["link", "Hyperlink", true, "mid"], ["clip", "Attachment", false, "wide"], ["stamp", "Stamp", true, "slim"]];
const viewTools: Tool[] = [["monitor", "View", true], ["revu", "Settings", true]];
const strip = ["boldA", "printer2", "note", "pen", "marker", "eraser", "", "link", "stamp", "clip", "plan", "noteplus", "", "line", "arrowline", "poly", "callout", "rect", "circ", "shape", "cloud", "cloud2", "photo", "crop"];

@customElement("app-root")
class AppRoot extends LitElement {
  static styles = [base, css`
    :host { display: grid; grid-template-rows: auto auto minmax(0, 1fr) 21px 31px; height: 100vh; background: #1f1f1f; overflow: hidden; }
    .menu { display: flex; height: 19px; background: #000; font: 10px/19px Lato, "Open Sans", sans-serif; color: #fff; align-items: center; }
    .brand { width: 39px; padding-left: 10px; font: italic bold 12px/19px "Liberation Serif", serif; }
    .menu button { padding: 0 10px; height: 19px; }
    .menu .on { background: #202020; }
    .sysbtns { margin-left: auto; display: flex; }
    .sysbtns button { width: 20px; padding: 0; }
    .ribbon { background: #202020; height: 83px; display: flex; flex-direction: column; gap: 6px; padding-top: 9px; }
    .big, .small { display: flex; align-items: center; }
    .big .expand { width: 29px; height: 28px; align-self: flex-start; }
    .tool { width: 42px; flex-direction: column; font-size: 8px; line-height: 11px; gap: 3px; }
    .tool span { display: flex; align-items: center; gap: 2px; height: 26px; }
    .file { width: 41px; }
    .file span, .mid span { gap: 5px; }
    .mid { width: 44px; }
    .wide { width: 56px; }
    .slim { width: 38px; }
    .gap { width: 34px; }
    .push { margin-left: auto; padding-right: 2px; display: flex; }
    .small { height: 19px; padding-left: 2px; }
    .small .dots { width: 8px; }
    .small .dots.w { width: 12px; }
    .ib { width: 19px; height: 19px; }
    .dd { width: 10px; height: 19px; }
    .tight { display: flex; }
    .tight .ib { width: 17px; }
    .tight .dd { width: 9px; }
    .scallop { width: 54px; justify-content: flex-start; padding-left: 4px; }
    .combo { display: flex; height: 17px; background: #fff; margin-right: 1px; color: #222; align-items: center; }
    .combo select { flex: 1; width: 10px; height: 17px; border: 0; background: none; color: #333; padding: 0 3px; }
    .combo i { width: 10px; height: 15px; background: #b9b9b9; display: grid; place-items: center; margin-right: 1px; }
    .font { width: 81px; margin-left: 2px; }
    .size { width: 32px; }
    .sep { width: 1px; height: 13px; background: #aaa; margin: 0 1px; }
    .blue { color: #1b86cf; font-size: 14px; }
    .it { font-style: italic; font-family: "Liberation Serif", serif; }
    .un { text-decoration: underline; }
    .sel { border: 1px solid #2f6f9c; background: #2b3f4c; }
    .main { display: grid; grid-template-columns: 146px minmax(0, 1fr) 212px 21px; min-height: 0; }
    .center { display: flex; flex-direction: column; min-height: 0; min-width: 0; }
    .doctabs { display: flex; height: 21px; align-items: center; flex: none; background: #1e1e1e; }
    .doctab { height: 21px; width: 65px; background: linear-gradient(90deg, #4a4a4a, #2c2c2c); font: bold 11px/21px "Open Sans", sans-serif; gap: 4px; padding-left: 8px; }
    .docbtns { margin-left: auto; display: flex; height: 21px; }
    .docbtns button { width: 20px; }
    .docbtns .rec { width: 22px; background: #5a5a5a; }
    .work { flex: 1; min-height: 0; border: solid #565656; border-width: 0 6px 7px; display: grid; grid-template-columns: minmax(0, 1fr) 13px; grid-template-rows: minmax(0, 1fr) 13px 20px; position: relative; }
    plan-view { border-top: 1px solid #111; }
    .vs { display: grid; grid-template-rows: 14px 338fr 77fr 61fr 14px; background: #ececec; align-items: center; justify-items: center; color: #222; border-top: 1px solid #111; }
    .hs { display: grid; grid-template-columns: 12px 258fr 178fr 415fr 12px; background: #ececec; align-items: center; justify-items: center; color: #222; }
    .vs b, .hs b { width: 100%; height: 100%; border: 1px solid #999; background: linear-gradient(90deg, #f4f4f4, #c4c4c4); display: grid; place-items: center; }
    .hs b { background: linear-gradient(#f4f4f4, #c4c4c4); }
    .vs b::before { content: ""; width: 6px; height: 7px; background: repeating-linear-gradient(#555 0 1px, transparent 1px 3px); }
    .hs b::before { content: ""; width: 8px; height: 5px; background: repeating-linear-gradient(90deg, #555 0 1px, transparent 1px 3px); }
    .corner, .corner2 { background: #161616; display: grid; place-items: center; }
    .nav { background: #1a1a1a; display: flex; align-items: center; min-width: 0; }
    .nav button { width: 19px; height: 18px; flex: none; }
    .nav .dd { width: 10px; }
    .nav .g1 { display: flex; width: 76px; }
    .nav .g2 { display: flex; width: 155px; }
    .nav .g3 { display: flex; }
    .zoom { width: 61px; height: 15px; margin: 0 19px 0 2px; font-size: 8px; }
    .zoom select { height: 15px; }
    .zoom i { height: 13px; }
    .pagebox { width: 171px; height: 15px; border: 0; background: #fff; color: #222; text-align: center; font-size: 8px; margin: 0 1px 0 2px; }
    .right { margin-left: auto; display: flex; align-items: center; }
    .bump { position: absolute; background: #1b8fd8; color: #fff; display: grid; place-items: center; }
    .bl { left: -6px; top: 248px; width: 11px; height: 21px; border-radius: 0 11px 11px 0; }
    .br { right: -6px; top: 248px; width: 11px; height: 21px; border-radius: 11px 0 0 11px; }
    .bb { left: 50%; margin-left: -12px; bottom: -7px; width: 23px; height: 12px; border-radius: 12px 12px 0 0; }
    .strip { display: flex; flex-direction: column; align-items: center; background: #1b1b1b; overflow: hidden; padding-top: 1px; }
    .strip button { width: 21px; height: 22px; flex: none; }
    .strip hr { width: 13px; height: 2px; margin: 1px 0; border: 0; flex: none; background: repeating-linear-gradient(90deg, #ddd 0 2px, transparent 2px 4px); }
    .strip hr.top { margin: 0; }
    .status { display: flex; align-items: center; background: #1f1f1f; border-bottom: 2px solid #4a4a4a; font: 10px/18px Lato, "Open Sans", sans-serif; padding-left: 3px; white-space: nowrap; }
    .status .msg { flex: 1; }
    .snaps { display: flex; gap: 9px; width: 301px; align-items: center; }
    .dim { width: 112px; }
    .pos { width: 91px; }
    .task { display: flex; align-items: center; background: linear-gradient(100deg, #07070d, #0a0a16 30%, #0c0a1c 48%, #06060c 60%, #08080f); }
    .task button { height: 31px; }
    .orb { width: 46px; padding-right: 3px; }
    .app { width: 50px; }
    .open { width: 46px; margin-right: 3px; border: 1px solid #777; border-radius: 2px; background: linear-gradient(#4b4b4f, #232327); }
    .live { background: linear-gradient(#b9b9bd, #77777c); }
    .launch { display: flex; width: 197px; align-items: center; }
    .tray { margin-left: auto; display: flex; align-items: center; height: 31px; }
    .batt { width: 74px; height: 31px; border: 1px solid #555; border-right: 0; border-radius: 6px 0 0 0; display: flex; align-items: center; gap: 11px; padding-left: 2px; background: linear-gradient(#2b2b2f, #0b0b0e); }
    .pill { width: 34px; height: 14px; border-radius: 7px; border: 1px solid #d0e8d0; background: linear-gradient(#4fbf58, #118a1d); }
    .trayicons { display: flex; gap: 10px; width: 62px; padding-left: 7px; align-items: center; }
    .clock { width: 58px; text-align: center; font: 9px/13px "Open Sans", sans-serif; color: #fff; }
    .peek { width: 11px; border: 1px solid #555; background: #111; }
  `];
  private tool([icon, label, drop, cls = ""]: Tool, extra = "") {
    return html`<button class="tool ${extra} ${cls}"><span>${ic(icon, 24)}${drop ? tri("d", 5) : nothing}</span>${label}</button>`;
  }
  private ib = (n: string, s = 14) => html`<button class="ib" aria-label=${n}>${ic(n, s)}</button>`;
  private dd = () => html`<button class="dd" aria-label="More">${tri("d", 5)}</button>`;
  private combo(cls: string, v: string, label: string) {
    return html`<div class="combo ${cls}"><select aria-label=${label}><option>${v}</option></select><i>${tri("d", 5)}</i></div>`;
  }
  render() {
    return html`
      <nav class="menu">
        <span class="brand">Revu</span>
        ${["File", "Edit", "View", "Document", "Form", "Markup", "Measure", "Window", "Help"].map(m => html`<button class=${m === "Markup" ? "on" : ""}>${m}</button>`)}
        <div class="sysbtns">
          <button aria-label="Collapse">${tri("u", 8)}</button>
          <button aria-label="Minimize"><svg width="10" height="10"><path d="M0 4h10v3H0z" fill="#fff"/></svg></button>
          <button aria-label="Restore"><svg width="10" height="10" fill="none" stroke="#fff" stroke-width="2"><path d="M4 1h5v4H4zM1 4h5v4H1z"/></svg></button>
          <button aria-label="Close"><svg width="9" height="9" stroke="#fff" stroke-width="2"><path d="M1 1l7 7M8 1 1 8"/></svg></button>
        </div>
      </nav>
      <header class="ribbon">
        <div class="big">
          <button class="expand" aria-label="Profiles">${ic("expand", 15)}</button>
          ${fileTools.map(t => this.tool(t, "file"))}<div class="gap"></div>
          ${markupTools.map(t => this.tool(t))}
          <div class="push">${viewTools.map(t => this.tool(t))}</div>
        </div>
        <div class="small">
          <div class="dots"></div>${this.ib("undo", 15)}${this.dd()}${this.ib("redo", 15)}${this.dd()}
          ${["cut", "copy", "paste", "brush", "del", "key", "cam2", "snap"].map(n => this.ib(n, n === "del" ? 12 : 15))}
          <div class="dots w"></div>${this.ib("rotl")}${this.ib("rotr")}<div class="dots"></div>
          <div class="tight">${["bucket", "layer", "hatch"].map(n => html`${this.ib(n, 15)}${this.dd()}`)}</div>
          <div class="dots w"></div>
          <button class="scallop" aria-label="Line style"><svg width="46" height="14" viewBox="0 0 46 14">${range(5).map(i => svg`<path d="M${1 + i * 9} 12c-1-13 10-13 9-4" fill="none" stroke="#1f6fa6" stroke-width="1.500"/>`)}</svg></button>
          <div class="tight">${["lines1", "lines2", "lines3"].map(n => html`${this.ib(n, 15)}${this.dd()}`)}</div>
          <div class="dots w"></div>
          ${this.combo("font", "Helvetica", "Font")}${this.combo("size", "12", "Font size")}
          <div class="sep"></div>${this.ib("textcolor", 15)}${this.dd()}<div class="sep"></div>
          <button class="ib blue"><b>B</b></button><button class="ib blue it">I</button><button class="ib blue un">U</button>
          <div class="sep"></div><button class="ib sel" aria-label="Align left">${ic("al")}</button>${this.ib("ac")}${this.ib("ar")}
        </div>
      </header>
      <main class="main">
        <file-panel></file-panel>
        <section class="center">
          <div class="doctabs">
            <button class="doctab">A 201*<svg width="9" height="9" viewBox="0 0 9 9" fill="none" stroke="#aaa"><circle cx="4.500" cy="4.500" r="4"/><path d="m3 3 3 3M6 3 3 6"/></svg></button>
            <div class="docbtns"><button aria-label="Tabs">${tri("d", 12, "#bbb")}</button><button aria-label="Close tab"><svg width="11" height="11" stroke="#1b86cf" stroke-width="3"><path d="m1 1 9 9M10 1 1 10"/></svg></button><button class="rec" aria-label="Marker"><svg width="10" height="6"><rect width="9" height="5" rx="2" fill="#c8102e"/></svg></button></div>
          </div>
          <div class="work">
            <plan-view></plan-view>
            <div class="vs">${tri("u", 5)}<i></i><b></b><i></i>${tri("d", 5)}</div>
            <div class="hs">${tri("l", 5)}<i></i><b></b><i></i>${tri("r", 6)}</div>
            <div class="corner">${ic("page", 10)}</div>
            <div class="nav">
              <div class="g1">${["p1", "p2", "p3"].map(n => html`<button aria-label=${n}>${ic(n, 14)}</button>`)}</div>
              <div class="g2">${["p4", "p5"].map(n => html`<button aria-label=${n}>${ic(n, 14)}</button>`)}</div>
              <div class="g3"><button class="sel" aria-label="Pan">${ic("hand", 14)}</button>${["cursor", "lens", "ia"].map(n => html`<button aria-label=${n}>${ic(n, 14)}</button>`)}</div>
              ${this.combo("zoom", "129.38%", "Zoom")}
              <button aria-label="First page">${ic("first", 12)}</button><button aria-label="Previous page">${ic("prev", 12)}</button>
              <input class="pagebox" aria-label="Page" .value=${"A 201 (1 of 1)"}>
              <button aria-label="Next page">${ic("next", 12)}</button><button aria-label="Last page">${ic("last", 12)}</button>
              <div class="sep"></div><button aria-label="Back">${ic("back", 14)}</button><button aria-label="Forward">${ic("fwd", 13)}</button>
              <div class="right"><button aria-label="User">${ic("user", 14)}</button><button class="dd" aria-label="More">${tri("d", 5)}</button><button aria-label="Hint">${ic("bulb", 13)}</button><button class="dd" aria-label="More">${tri("d", 5)}</button><button aria-label="Security">${ic("lock", 13)}</button></div>
            </div>
            <div class="corner2">${tri("d", 5)}</div>
            <div class="bump bl">${tri("l", 6)}</div><div class="bump br">${tri("r", 6)}</div><div class="bump bb">${tri("u", 6)}</div>
          </div>
        </section>
        <properties-panel></properties-panel>
        <div class="strip"><hr class="top">${strip.map(n => n ? html`<button aria-label=${n}>${ic(n, 15)}</button>` : html`<hr>`)}</div>
      </main>
      <footer class="status">
        <span class="msg">Drag control points to resize, or drag callout to move. Double click to edit text</span>
        <div class="snaps"><b>Snap To:</b>${["Grid", "Content", "Markup", "Show Grid", "Reuse", "Sync"].map(s => html`<button>${s}</button>`)}${tri("d", 5)}</div>
        <span class="dim">42.00 x 30.00 in</span><span class="pos">(21.35, 24.25)</span>
      </footer>
      <div class="task">
        <div class="launch">
          <button class="orb" aria-label="Start"><svg width="30" height="30" viewBox="0 0 30 30"><circle cx="15" cy="15" r="14.500" fill="#2d5f86" stroke="#7a98ad"/><ellipse cx="15" cy="8" rx="11" ry="6" fill="#9cc3da" opacity=".6"/><path d="M8 9c3-2 4-1 6 0l-1 5c-3-1-4-1-6 0z" fill="#e0532c"/><path d="M15 9c3 1 4 1 7 0l-2 6c-2 1-4 0-6 0z" fill="#8cc63e"/><path d="M6 15c3-1 4-1 6 0l-1 6c-2-1-4-1-6 0z" fill="#3b8fd8"/><path d="M13 16c3 1 4 1 7 0l-2 6c-2 1-4 0-6 0z" fill="#f6c92d"/></svg></button>
          <button class="app" aria-label="Mail"><svg width="25" height="24" viewBox="0 0 25 24"><path d="M12 5h12v13H12z" fill="#fff"/><path d="m12 8 6 5 6-5" fill="none" stroke="#1672c0" stroke-width="2"/><path d="M0 3 14 0v24L0 21z" fill="#1672c0"/><ellipse cx="7" cy="12" rx="3.500" ry="4.500" fill="none" stroke="#fff" stroke-width="2"/></svg></button>
          <button class="app" aria-label="Browser"><svg width="24" height="24" viewBox="0 0 24 24"><circle cx="12" cy="12" r="12" fill="#e0412f"/><path d="M1.600 6A12 12 0 0 0 11 24l6-9-5-3z" fill="#3fa74a"/><path d="M11 24A12 12 0 0 0 22.800 7H12l5 8z" fill="#f7ca2d"/><circle cx="12" cy="12" r="5.500" fill="#fff"/><circle cx="12" cy="12" r="4.300" fill="#3b7fe0"/></svg></button>
          <button class="app" aria-label="Explorer"><svg width="26" height="25" viewBox="0 0 26 25"><path d="M2 3h7l2 2h13v17H2z" fill="#d8ca62"/><path d="M1 9h24v14H1z" fill="#f0ea9a"/><path d="M4 24v-7q0-3 3-3h12q3 0 3 3v7h-4v-5H8v5z" fill="#7cc3dc"/><path d="M6 2h3v5H6z" fill="#3a9a4a"/><path d="M15 2h3v5h-3z" fill="#c8443a"/></svg></button>
        </div>
        <button class="open" aria-label="Slides"><svg width="25" height="25" viewBox="0 0 25 25"><path d="M12 4h12v17H12z" fill="#fff"/><circle cx="18" cy="9" r="3" fill="#d24726"/><path d="M14 15h8M14 18h8" stroke="#d24726" stroke-width="1.500"/><path d="M0 3 15 0v25L0 22z" fill="#d24726"/><path d="M5 18V8h3.500q3 0 3 3t-3 3H5" fill="none" stroke="#fff" stroke-width="2"/></svg></button>
        <button class="open live" aria-label="Revu"><svg width="25" height="25" viewBox="0 0 24 24"><circle cx="12" cy="12" r="12" fill="#1c1c1c"/><path d="M5 19C5 9 8 4 14 4c6 0 6 7-2 8l-3 0 5 9c3 0 4-2 5-3" fill="none" stroke="#fff" stroke-width="2.600"/></svg></button>
        <button class="open" aria-label="Meeting"><svg width="25" height="25" viewBox="-12 -12 24 24">${range(8).map(i => svg`<g transform="rotate(${i * 45})"><path d="M0 0V-8" stroke="#4a7fd8" stroke-width="1.500"/><circle cy="-8.500" r="2.800" fill="#5b94ea"/></g>`)}<circle r="4" fill="#3b6fd0"/></svg></button>
        <div class="tray">
          <div class="batt"><div class="pill"></div><svg width="15" height="14" viewBox="0 0 15 14" fill="#eee"><path d="M0 5h5v4H0zM8 1h5v3H8zM9 6h6v3H9zM8 11h5v3H8z"/><path d="M4 7h3V2h2M7 7h3M7 7v5h2" fill="none" stroke="#eee"/></svg></div>
          <div class="trayicons">${tri("u", 7)}<svg width="8" height="12" viewBox="0 0 8 12"><path d="M1 2h6v9H1zM3 0h2v2H3z" fill="none" stroke="#eee" stroke-width="1.500"/><path d="M1 7h6v4H1z" fill="#eee"/></svg><svg width="13" height="12" viewBox="0 0 13 12"><path d="M0 4h2l4-3v10L2 8H0z" fill="#eee"/><path d="M8 3q2 3 0 6M10 1q4 5 0 10" fill="none" stroke="#eee"/></svg></div>
          <div class="clock">10:23 AM<br>3/8/2016</div>
          <button class="peek" aria-label="Show desktop"></button>
        </div>
      </div>`;
  }
}
